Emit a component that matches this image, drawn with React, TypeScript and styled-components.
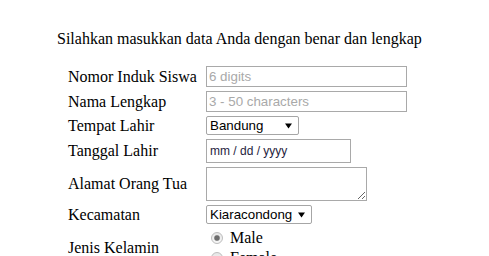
import styled, { createGlobalStyle } from "styled-components";

const GlobalStyle = createGlobalStyle`
  html, body {
    margin: 0;
    padding: 0;
    background: #ffffff;
  }
  body {
    font-family: "Liberation Serif", "Times New Roman", serif;
    font-size: 16px;
    color: #000;
  }
`;

const Page = styled.div`
  padding: 30px 0 0 57px;
`;

const Intro = styled.p`
  margin: 0;
  line-height: 18px;
`;

const Form = styled.form`
  display: grid;
  grid-template-columns: 138px auto;
  align-items: center;
  row-gap: 4px;
  margin: 18px 0 0 11px;
`;

const Label = styled.label`
  line-height: 18px;
  white-space: nowrap;
`;

const Field = styled.div`
  display: flex;
  align-items: center;
`;

const TextInput = styled.input<{ $w: number }>`
  box-sizing: border-box;
  width: ${(p) => p.$w}px;
  height: 21px;
  margin: 0;
  padding: 1px 2px;
  border: 1px solid #a9a9a9;
  font-family: "Liberation Sans", Arial, sans-serif;
  font-size: 13.33px;
  color: #000;
  outline: none;

  &::placeholder {
    color: #a9a9a9;
  }
`;

const DateBox = styled(TextInput)`
  height: 24px;
  padding: 1px 3px;
  font-size: 12px;
  color: #1f2340;
`;

const SelectBox = styled.div<{ $w: number }>`
  box-sizing: border-box;
  display: inline-flex;
  align-items: center;
  width: ${(p) => p.$w}px;
  height: 19px;
  border: 1px solid #a6a6a6;
  border-radius: 2px;
  background: #fff;
  padding-right: 6px;
`;

const Select = styled.select`
  flex: 1;
  min-width: 0;
  appearance: none;
  border: none;
  background: transparent;
  margin: 0;
  padding: 0 0 0 3px;
  height: 17px;
  font-family: "Liberation Sans", Arial, sans-serif;
  font-size: 13.33px;
  color: #000;
  outline: none;
`;

const Arrow = () => (
  <svg width="7" height="6" viewBox="0 0 7 6" aria-hidden>
    <path d="M0 0.5h7L3.5 5.5z" fill="#000" />
  </svg>
);

const TextArea = styled.textarea`
  box-sizing: border-box;
  width: 161px;
  height: 34px;
  margin: 0;
  padding: 2px;
  border: 1px solid #a9a9a9;
  font-family: "Liberation Mono", monospace;
  font-size: 13px;
  outline: none;
`;

const RadioGroup = styled.div`
  display: flex;
  flex-direction: column;
`;

const RadioOption = styled.label`
  display: flex;
  align-items: center;
  height: 20px;
  line-height: 18px;
  white-space: nowrap;
`;

const Radio = styled.input`
  appearance: none;
  box-sizing: border-box;
  width: 12px;
  height: 12px;
  margin: 0 7px 0 5px;
  border: 1px solid #bdbdbd;
  border-radius: 50%;
  background: linear-gradient(#e6e6e6, #f7f7f7);

  &:checked {
    background: radial-gradient(circle, #6d6d6d 0 2.2px, #a9a9a9 2.8px, transparent 3.4px),
      linear-gradient(#e6e6e6, #f7f7f7);
  }
`;

export default function App() {
  return (
    <Page>
      <GlobalStyle />
      <Intro>Silahkan masukkan data Anda dengan benar dan lengkap</Intro>
      <Form>
        <Label>Nomor Induk Siswa</Label>
        <Field>
          <TextInput $w={201} placeholder="6 digits" />
        </Field>

        <Label>Nama Lengkap</Label>
        <Field>
          <TextInput $w={201} placeholder="3 - 50 characters" />
        </Field>

        <Label>Tempat Lahir</Label>
        <Field>
          <SelectBox $w={93}>
            <Select defaultValue="Bandung">
              <option>Bandung</option>
              <option>Jakarta</option>
            </Select>
            <Arrow />
          </SelectBox>
        </Field>

        <Label>Tanggal Lahir</Label>
        <Field>
          <DateBox $w={145} readOnly value="mm / dd / yyyy" />
        </Field>

        <Label>Alamat Orang Tua</Label>
        <Field>
          <TextArea />
        </Field>

        <Label>Kecamatan</Label>
        <Field>
          <SelectBox $w={106}>
            <Select defaultValue="Kiaracondong">
              <option>Kiaracondong</option>
              <option>Coblong</option>
            </Select>
            <Arrow />
          </SelectBox>
        </Field>

        <Label>Jenis Kelamin</Label>
        <RadioGroup>
          <RadioOption>
            <Radio type="radio" name="gender" defaultChecked />
            Male
          </RadioOption>
          <RadioOption>
            <Radio type="radio" name="gender" />
            Female
          </RadioOption>
        </RadioGroup>
      </Form>
    </Page>
  );
}
